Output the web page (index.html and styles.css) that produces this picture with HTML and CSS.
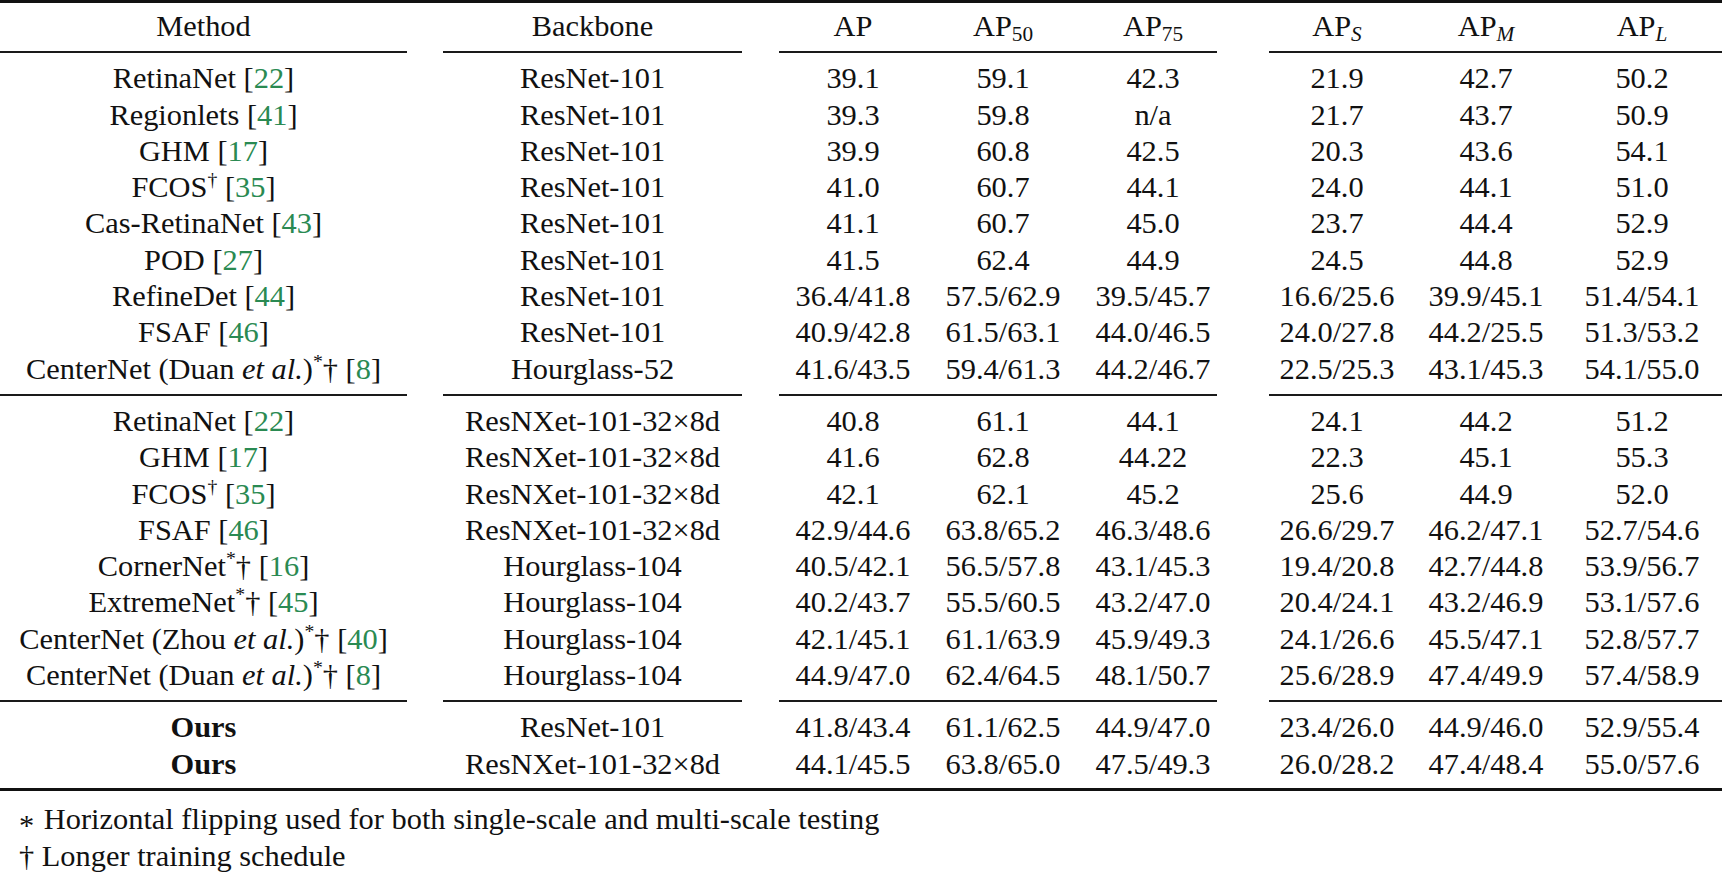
FILE: index.html
```html
<!DOCTYPE html>
<html>
<head>
<meta charset="utf-8">
<link rel="stylesheet" href="styles.css">
</head>
<body>
<div class="table">
  <div class="rule-thick"></div>
  <div class="row head">
    <div class="c c1">Method</div>
    <div class="c c2">Backbone</div>
    <div class="c c3">AP</div>
    <div class="c c4">AP<sub>50</sub></div>
    <div class="c c5">AP<sub>75</sub></div>
    <div class="c c6">AP<sub><i>S</i></sub></div>
    <div class="c c7">AP<sub><i>M</i></sub></div>
    <div class="c c8">AP<sub><i>L</i></sub></div>
  </div>
  <div class="rules"><div class="r r1"></div><div class="r r2"></div><div class="r r3"></div><div class="r r4"></div></div>

  <div class="body">
    <div class="row"><div class="c c1">RetinaNet [<span class="cite">22</span>]</div><div class="c c2">ResNet-101</div><div class="c c3">39.1</div><div class="c c4">59.1</div><div class="c c5">42.3</div><div class="c c6">21.9</div><div class="c c7">42.7</div><div class="c c8">50.2</div></div>
    <div class="row"><div class="c c1">Regionlets [<span class="cite">41</span>]</div><div class="c c2">ResNet-101</div><div class="c c3">39.3</div><div class="c c4">59.8</div><div class="c c5">n/a</div><div class="c c6">21.7</div><div class="c c7">43.7</div><div class="c c8">50.9</div></div>
    <div class="row"><div class="c c1">GHM [<span class="cite">17</span>]</div><div class="c c2">ResNet-101</div><div class="c c3">39.9</div><div class="c c4">60.8</div><div class="c c5">42.5</div><div class="c c6">20.3</div><div class="c c7">43.6</div><div class="c c8">54.1</div></div>
    <div class="row"><div class="c c1">FCOS<sup>†</sup> [<span class="cite">35</span>]</div><div class="c c2">ResNet-101</div><div class="c c3">41.0</div><div class="c c4">60.7</div><div class="c c5">44.1</div><div class="c c6">24.0</div><div class="c c7">44.1</div><div class="c c8">51.0</div></div>
    <div class="row"><div class="c c1">Cas-RetinaNet [<span class="cite">43</span>]</div><div class="c c2">ResNet-101</div><div class="c c3">41.1</div><div class="c c4">60.7</div><div class="c c5">45.0</div><div class="c c6">23.7</div><div class="c c7">44.4</div><div class="c c8">52.9</div></div>
    <div class="row"><div class="c c1">POD [<span class="cite">27</span>]</div><div class="c c2">ResNet-101</div><div class="c c3">41.5</div><div class="c c4">62.4</div><div class="c c5">44.9</div><div class="c c6">24.5</div><div class="c c7">44.8</div><div class="c c8">52.9</div></div>
    <div class="row"><div class="c c1">RefineDet [<span class="cite">44</span>]</div><div class="c c2">ResNet-101</div><div class="c c3">36.4/41.8</div><div class="c c4">57.5/62.9</div><div class="c c5">39.5/45.7</div><div class="c c6">16.6/25.6</div><div class="c c7">39.9/45.1</div><div class="c c8">51.4/54.1</div></div>
    <div class="row"><div class="c c1">FSAF [<span class="cite">46</span>]</div><div class="c c2">ResNet-101</div><div class="c c3">40.9/42.8</div><div class="c c4">61.5/63.1</div><div class="c c5">44.0/46.5</div><div class="c c6">24.0/27.8</div><div class="c c7">44.2/25.5</div><div class="c c8">51.3/53.2</div></div>
    <div class="row"><div class="c c1">CenterNet (Duan <i>et al.</i>)<sup>*</sup>† [<span class="cite">8</span>]</div><div class="c c2">Hourglass-52</div><div class="c c3">41.6/43.5</div><div class="c c4">59.4/61.3</div><div class="c c5">44.2/46.7</div><div class="c c6">22.5/25.3</div><div class="c c7">43.1/45.3</div><div class="c c8">54.1/55.0</div></div>
  </div>
  <div class="rules"><div class="r r1"></div><div class="r r2"></div><div class="r r3"></div><div class="r r4"></div></div>

  <div class="body">
    <div class="row"><div class="c c1">RetinaNet [<span class="cite">22</span>]</div><div class="c c2">ResNXet-101-32×8d</div><div class="c c3">40.8</div><div class="c c4">61.1</div><div class="c c5">44.1</div><div class="c c6">24.1</div><div class="c c7">44.2</div><div class="c c8">51.2</div></div>
    <div class="row"><div class="c c1">GHM [<span class="cite">17</span>]</div><div class="c c2">ResNXet-101-32×8d</div><div class="c c3">41.6</div><div class="c c4">62.8</div><div class="c c5">44.22</div><div class="c c6">22.3</div><div class="c c7">45.1</div><div class="c c8">55.3</div></div>
    <div class="row"><div class="c c1">FCOS<sup>†</sup> [<span class="cite">35</span>]</div><div class="c c2">ResNXet-101-32×8d</div><div class="c c3">42.1</div><div class="c c4">62.1</div><div class="c c5">45.2</div><div class="c c6">25.6</div><div class="c c7">44.9</div><div class="c c8">52.0</div></div>
    <div class="row"><div class="c c1">FSAF [<span class="cite">46</span>]</div><div class="c c2">ResNXet-101-32×8d</div><div class="c c3">42.9/44.6</div><div class="c c4">63.8/65.2</div><div class="c c5">46.3/48.6</div><div class="c c6">26.6/29.7</div><div class="c c7">46.2/47.1</div><div class="c c8">52.7/54.6</div></div>
    <div class="row"><div class="c c1">CornerNet<sup>*</sup>† [<span class="cite">16</span>]</div><div class="c c2">Hourglass-104</div><div class="c c3">40.5/42.1</div><div class="c c4">56.5/57.8</div><div class="c c5">43.1/45.3</div><div class="c c6">19.4/20.8</div><div class="c c7">42.7/44.8</div><div class="c c8">53.9/56.7</div></div>
    <div class="row"><div class="c c1">ExtremeNet<sup>*</sup>† [<span class="cite">45</span>]</div><div class="c c2">Hourglass-104</div><div class="c c3">40.2/43.7</div><div class="c c4">55.5/60.5</div><div class="c c5">43.2/47.0</div><div class="c c6">20.4/24.1</div><div class="c c7">43.2/46.9</div><div class="c c8">53.1/57.6</div></div>
    <div class="row"><div class="c c1">CenterNet (Zhou <i>et al.</i>)<sup>*</sup>† [<span class="cite">40</span>]</div><div class="c c2">Hourglass-104</div><div class="c c3">42.1/45.1</div><div class="c c4">61.1/63.9</div><div class="c c5">45.9/49.3</div><div class="c c6">24.1/26.6</div><div class="c c7">45.5/47.1</div><div class="c c8">52.8/57.7</div></div>
    <div class="row"><div class="c c1">CenterNet (Duan <i>et al.</i>)<sup>*</sup>† [<span class="cite">8</span>]</div><div class="c c2">Hourglass-104</div><div class="c c3">44.9/47.0</div><div class="c c4">62.4/64.5</div><div class="c c5">48.1/50.7</div><div class="c c6">25.6/28.9</div><div class="c c7">47.4/49.9</div><div class="c c8">57.4/58.9</div></div>
  </div>
  <div class="rules"><div class="r r1"></div><div class="r r2"></div><div class="r r3"></div><div class="r r4"></div></div>

  <div class="body">
    <div class="row"><div class="c c1"><b>Ours</b></div><div class="c c2">ResNet-101</div><div class="c c3">41.8/43.4</div><div class="c c4">61.1/62.5</div><div class="c c5">44.9/47.0</div><div class="c c6">23.4/26.0</div><div class="c c7">44.9/46.0</div><div class="c c8">52.9/55.4</div></div>
    <div class="row"><div class="c c1"><b>Ours</b></div><div class="c c2">ResNXet-101-32×8d</div><div class="c c3">44.1/45.5</div><div class="c c4">63.8/65.0</div><div class="c c5">47.5/49.3</div><div class="c c6">26.0/28.2</div><div class="c c7">47.4/48.4</div><div class="c c8">55.0/57.6</div></div>
  </div>
  <div class="rule-thick bottom"></div>
</div>
<div class="notes">
  <div class="note"><span class="ast">*</span> Horizontal flipping used for both single-scale and multi-scale testing</div>
  <div class="note">† Longer training schedule</div>
</div>
</body>
</html>
```
FILE: styles.css
```css
html, body {
  margin: 0;
  padding: 0;
  background: #ffffff;
  overflow: hidden;
}
body {
  font-family: "Liberation Serif", "Times New Roman", serif;
  font-size: 30.4px;
  color: #111111;
}
.table {
  width: 1724px;
}
.rule-thick {
  height: 3px;
  background: #111111;
  width: 1722px;
}
.rule-thick.bottom {
  margin-top: -1px;
}
.row {
  display: flex;
  height: 36.3px;
  line-height: 36.3px;
  white-space: nowrap;
}
.head {
  margin-top: 5px;
}
.body {
  padding: 7px 0;
}
.c {
  text-align: center;
  flex: none;
}
.c1 { width: 407px; padding-right: 18px; }
.c2 { width: 335px; }
.c3 { width: 150px; margin-left: 18px; }
.c4 { width: 150px; }
.c5 { width: 150px; }
.c6 { width: 150px; margin-left: 34px; }
.c7 { width: 148px; }
.c8 { width: 164px; }
.rules {
  display: flex;
  margin-top: 7px;
  height: 2px;
}
.body + .rules { margin-top: 0; }
.r {
  height: 2px;
  background: #1a1a1a;
  flex: none;
}
.r1 { width: 407px; }
.r2 { width: 299px; margin-left: 36px; }
.r3 { width: 438px; margin-left: 37px; }
.r4 { width: 453px; margin-left: 52px; }
sub {
  font-size: 0.7em;
  vertical-align: -0.22em;
  line-height: 0;
}
sub i { font-style: italic; }
sup {
  font-size: 0.65em;
  vertical-align: 0.55em;
  line-height: 0;
}
.cite {
  color: #2a8a52;
}
b { font-weight: bold; }
.notes {
  padding-top: 12px;
  padding-left: 19px;
}
.note {
  height: 32px;
  line-height: 32px;
  white-space: nowrap;
}
.note + .note {
  margin-top: 5px;
}
.ast {
  vertical-align: -0.2em;
  margin-right: 2px;
}
```
